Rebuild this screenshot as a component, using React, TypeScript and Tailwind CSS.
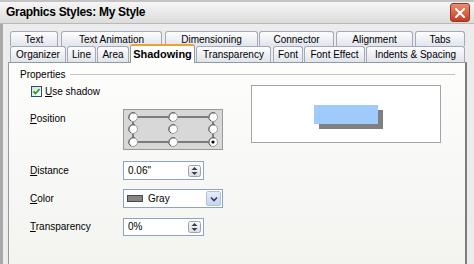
import React from "react";

const topTabs = [
  { label: "Text", cls: "ml-[2px] w-[48px]" },
  { label: "Text Animation", cls: "ml-[3px] w-[101px]" },
  { label: "Dimensioning", cls: "ml-[3px] w-[93px]" },
  { label: "Connector", cls: "ml-[1px] w-[75px]" },
  { label: "Alignment", cls: "ml-[2px] w-[77px]" },
  { label: "Tabs", cls: "ml-[2px] w-[50px]" },
];

const frontTabs = [
  { label: "Organizer", cls: "ml-[2px] w-[56px]" },
  { label: "Line", cls: "ml-[1px] w-[29px]" },
  { label: "Area", cls: "ml-[1px] w-[32px]" },
  { label: "Shadowing", cls: "ml-[1px] w-[65px]", active: true },
  { label: "Transparency", cls: "ml-[1px] w-[75px]" },
  { label: "Font", cls: "ml-[2px] w-[30px]" },
  { label: "Font Effect", cls: "ml-[1px] w-[61px]" },
  { label: "Indents & Spacing", cls: "ml-[1px] w-[99px]" },
];

function Tab({ label, cls, active }: { label: string; cls: string; active?: boolean }) {
  if (active) {
    return (
      <div
        className={`${cls} relative z-10 -mb-px h-[19px] rounded-t-[3px] border border-b-0 border-[#919b9c] border-t-2 border-t-[#f0a030] bg-white flex items-center justify-center text-[11px] font-bold`}
      >
        {label}
      </div>
    );
  }
  return (
    <div
      className={`${cls} h-full rounded-t-[3px] border border-b-0 border-[#a3a9b8] bg-linear-to-b from-[#fdfdfe] to-[#e1e4ec] flex items-center justify-center text-[10px]`}
    >
      {label}
    </div>
  );
}

function Spin() {
  return (
    <svg width="13" height="12" viewBox="0 0 13 12">
      <defs>
        <linearGradient id="sp" x1="0" y1="0" x2="0" y2="1">
          <stop offset="0" stopColor="#fbfbfb" />
          <stop offset="1" stopColor="#d9dce4" />
        </linearGradient>
      </defs>
      <rect x="0.5" y="0.5" width="12" height="11" rx="2" fill="url(#sp)" stroke="#9aa2b2" />
      <path d="M3.5 5 L6.5 2 L9.5 5 Z" fill="#3a3f4a" />
      <path d="M3.5 7 L6.5 10 L9.5 7 Z" fill="#3a3f4a" />
    </svg>
  );
}

function Radio({ x, y, on }: { x: number; y: number; on?: boolean }) {
  return (
    <g>
      <circle cx={x} cy={y} r="4.5" fill="#fff" stroke="#9a9a9a" />
      <path d={`M${x + 2} ${y - 4} A4.5 4.5 0 0 0 ${x - 2} ${y + 4}`} fill="none" stroke="#555" />
      {on && <circle cx={x} cy={y} r="1.6" fill="#000" />}
    </g>
  );
}

function PositionGrid() {
  const xs = [10, 50, 90];
  const ys = [8, 20, 33];
  return (
    <div className="w-[100px] h-[41px] border border-[#9a9a9a] bg-[#d8d8d8]">
      <svg width="98" height="39" viewBox="1 1 98 39">
        <line x1="10" y1="8" x2="90" y2="8" stroke="#222" />
        <line x1="10" y1="33" x2="90" y2="33" stroke="#222" />
        <line x1="10" y1="8" x2="10" y2="33" stroke="#222" />
        <line x1="90" y1="8" x2="90" y2="33" stroke="#222" />
        {ys.map((y, r) =>
          xs.map((x, c) => <Radio key={`${r}-${c}`} x={x} y={y} on={r === 2 && c === 2} />)
        )}
      </svg>
    </div>
  );
}

function Row({ label, children }: { label: React.ReactNode; children: React.ReactNode }) {
  return (
    <div className="flex items-center h-[19px]">
      <div className="w-[93px] text-[10px]">{label}</div>
      {children}
    </div>
  );
}

export default function App() {
  return (
    <div className="w-[474px] h-[264px] overflow-hidden flex flex-col bg-[#ececec] text-black font-['Liberation_Sans',Arial,sans-serif] leading-[11px]">
      {/* title bar */}
      <div className="h-[24px] shrink-0 flex items-center justify-between border-t-2 border-t-[#c4c4c4] border-b border-b-[#b9b9b9] bg-linear-to-b from-[#f6f6f6] to-[#dcdcdc] pl-[6px] pr-[4px]">
        <span className="text-[12px] font-bold tracking-[-0.3px]">Graphics Styles: My Style</span>
        <div className="w-[20px] h-[19px] rounded-[3px] border border-[#9a3420] bg-linear-to-b from-[#eb8d75] to-[#c53b1d] flex items-center justify-center">
          <svg width="12" height="12" viewBox="0 0 12 12">
            <path d="M2 2 L10 10 M10 2 L2 10" stroke="#fff" strokeWidth="2" strokeLinecap="round" />
          </svg>
        </div>
      </div>

      {/* body */}
      <div className="flex-1 border-l-[3px] border-l-[#a8a8a8] pl-[5px] pt-[7px]">
        <div className="flex h-[15px]">
          {topTabs.map((t) => (
            <Tab key={t.label} {...t} />
          ))}
        </div>
        <div className="flex items-end h-[16px]">
          {frontTabs.map((t) => (
            <Tab key={t.label} {...t} />
          ))}
        </div>

        {/* panel */}
        <div className="w-[459px] h-[210px] border border-[#919b9c] border-r-2 border-r-[#7c7c7c] bg-linear-to-b from-[#fdfdfc] to-[#f3f3f0] pt-[6px]">
          <div className="flex items-center h-[11px] pl-[11px] pr-[10px] text-[10px]">
            <span>Properties</span>
            <div className="ml-[4px] h-px flex-1 bg-[#c3c3c3]" />
          </div>

          <div className="flex mt-[5px]">
            <div className="w-[242px] pl-[21px]">
              <div className="flex items-center mt-[1px] ml-[1px] h-[11px]">
                <div className="w-[11px] h-[11px] border border-[#1c5180] bg-linear-to-br from-[#dcdcd6] to-white flex items-center justify-center">
                  <svg width="9" height="9" viewBox="0 0 9 9">
                    <path d="M1.5 4.5 L3.5 6.5 L7.5 2" fill="none" stroke="#21a121" strokeWidth="1.8" />
                  </svg>
                </div>
                <span className="ml-[3px] text-[10px]">
                  <span className="underline">U</span>se shadow
                </span>
              </div>
              <div className="flex mt-[12px]">
                <div className="w-[93px] pt-[4px] text-[10px]">
                  <span className="underline">P</span>osition
                </div>
                <PositionGrid />
              </div>
            </div>
            <div className="w-[190px] h-[58px] border border-[#a5a5a5] bg-white flex items-center justify-center">
              <div className="w-[64px] h-[19px] bg-[#9fcbfa] shadow-[5px_5px_0_0_#808080]" />
            </div>
          </div>

          <div className="flex flex-col gap-[9px] mt-[11px] pl-[21px]">
            <Row label={<><span className="underline">D</span>istance</>}>
              <div className="w-[81px] h-[19px] border border-[#8ea4c0] bg-white flex items-center justify-between pl-[4px] pr-[2px] text-[10px]">
                <span>0.06"</span>
                <Spin />
              </div>
            </Row>
            <Row label={<><span className="underline">C</span>olor</>}>
              <div className="w-[100px] h-[19px] border border-[#8ea4c0] bg-white flex items-center text-[10px]">
                <div className="ml-[3px] w-[16px] h-[7px] border border-[#4a4a4a] bg-[#858585]" />
                <span className="ml-[5px] flex-1">Gray</span>
                <div className="w-[15px] h-[15px] mr-px rounded-[2px] border border-[#b3c1dd] bg-linear-to-b from-[#e6edfb] to-[#c7d4ef] flex items-center justify-center">
                  <svg width="8" height="6" viewBox="0 0 8 6">
                    <path d="M1 1.5 L4 4.5 L7 1.5" fill="none" stroke="#2d3a5a" strokeWidth="1.6" />
                  </svg>
                </div>
              </div>
            </Row>
            <Row label={<><span className="underline">T</span>ransparency</>}>
              <div className="w-[81px] h-[18px] border border-[#8ea4c0] bg-white flex items-center justify-between pl-[4px] pr-[2px] text-[10px]">
                <span>0%</span>
                <Spin />
              </div>
            </Row>
          </div>
        </div>
      </div>
    </div>
  );
}
